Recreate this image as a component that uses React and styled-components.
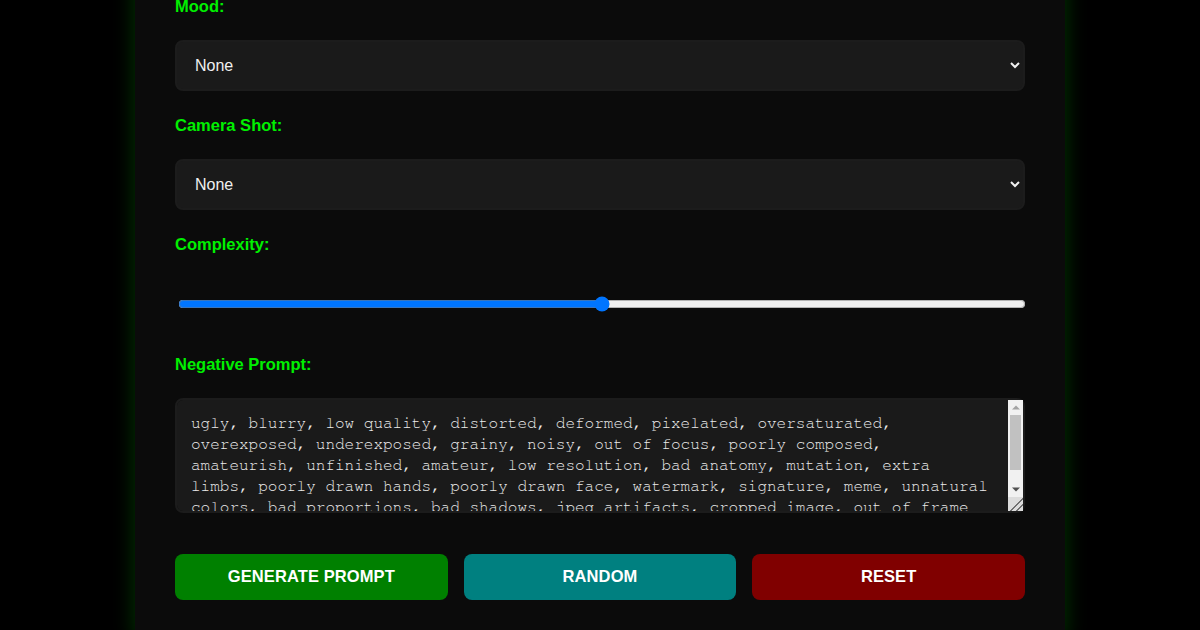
import React from "react";
import styled, { createGlobalStyle } from "styled-components";

const Global = createGlobalStyle`
  html, body {
    margin: 0;
    padding: 0;
    background: #000;
    font-family: "Liberation Sans", Arial, sans-serif;
    overflow: hidden;
  }
  * { box-sizing: border-box; }
`;

const Page = styled.div`
  display: flex;
  justify-content: center;
  min-height: 630px;
  background: #000;
`;

const Panel = styled.div`
  width: 930px;
  margin-top: -44px;
  padding: 40px 40px 40px;
  background: #0b0b0b;
  box-shadow: 0 0 20px rgba(0, 255, 0, 0.22);
  display: flex;
  flex-direction: column;
  gap: 24px;
`;

const Group = styled.div`
  display: flex;
  flex-direction: column;
  gap: 23px;
`;

const Label = styled.label`
  display: block;
  color: #00f000;
  font-weight: bold;
  font-size: 16.5px;
  line-height: 21px;
  height: 21px;
`;

const Select = styled.select`
  width: 100%;
  height: 51px;
  padding: 0 14px;
  background: #1a1a1a;
  color: #f0f0f0;
  border: 2px solid #1c1c1c;
  border-radius: 8px;
  font-family: "Liberation Sans", Arial, sans-serif;
  font-size: 16px;
  outline: none;
`;

const SliderWrap = styled.div`
  height: 52px;
  display: flex;
  align-items: center;
`;

const Range = styled.input`
  flex-shrink: 0;
  width: calc(100% - 2px);
  margin: 0 0 0 3px;
`;

const TextWrap = styled.div`
  position: relative;
  height: 115px;
`;

const TextArea = styled.textarea`
  display: block;
  width: 100%;
  height: 115px;
  padding: 13px 29px 15px 14px;
  background: #1a1a1a;
  color: #ececec;
  border: 2px solid #1c1c1c;
  border-radius: 8px;
  font-family: "Nimbus Mono PS", "Nimbus Mono L", FreeMono, Courier, "Liberation Mono", monospace;
  font-size: 16px;
  line-height: 21px;
  outline: none;

  &::-webkit-resizer {
    background-color: #dcdcdc;
    background-image: linear-gradient(
      135deg,
      transparent 0 55%,
      #707070 55% 61%,
      transparent 61% 76%,
      #707070 76% 82%,
      transparent 82%
    );
  }
`;

const ScrollBar = styled.div`
  position: absolute;
  top: 2px;
  right: 2px;
  width: 15px;
  height: 97px;
  background: #f1f1f1;
  display: flex;
  flex-direction: column;
  pointer-events: none;
`;

const ScrollButton = styled.div`
  height: 15px;
  display: flex;
  align-items: center;
  justify-content: center;
  flex-shrink: 0;
`;

const Track = styled.div`
  flex: 1;
  padding: 0 2px;
`;

const Thumb = styled.div`
  height: 55px;
  background: #c1c1c1;
`;

const Arrow = ({ up, color }) => (
  <svg width="8" height="5" viewBox="0 0 8 5">
    <polygon points={up ? "0,4.5 4,0.5 8,4.5" : "0,0.5 8,0.5 4,4.5"} fill={color} />
  </svg>
);

const Buttons = styled.div`
  display: grid;
  grid-template-columns: repeat(3, 1fr);
  gap: 16px;
  margin-top: 17px;
`;

const Button = styled.button`
  height: 46px;
  border: none;
  border-radius: 8px;
  background: ${(p) => p.$bg};
  color: #fff;
  font-family: "Liberation Sans", Arial, sans-serif;
  font-weight: bold;
  font-size: 16.5px;
  letter-spacing: 0.1px;
  line-height: 44px;
  padding: 0 0 2px;
  text-transform: uppercase;
  cursor: pointer;
`;

const negative =
  "ugly, blurry, low quality, distorted, deformed, pixelated, oversaturated, overexposed, underexposed, grainy, noisy, out of focus, poorly composed, amateurish, unfinished, amateur, low resolution, bad anatomy, mutation, extra limbs, poorly drawn hands, poorly drawn face, watermark, signature, meme, unnatural colors, bad proportions, bad shadows, jpeg artifacts, cropped image, out of frame";

export default function App() {
  return (
    <>
      <Global />
      <Page>
        <Panel>
          <Group>
            <Label>Mood:</Label>
            <Select defaultValue="None">
              <option>None</option>
              <option>Happy</option>
              <option>Dark</option>
            </Select>
          </Group>
          <Group>
            <Label>Camera Shot:</Label>
            <Select defaultValue="None">
              <option>None</option>
              <option>Close-up</option>
              <option>Wide shot</option>
            </Select>
          </Group>
          <Group>
            <Label>Complexity:</Label>
            <SliderWrap>
              <Range type="range" min="0" max="100" defaultValue="50" />
            </SliderWrap>
          </Group>
          <Group>
            <Label>Negative Prompt:</Label>
            <TextWrap>
              <TextArea defaultValue={negative} />
              <ScrollBar>
                <ScrollButton>
                  <Arrow up color="#a3a3a3" />
                </ScrollButton>
                <Track>
                  <Thumb />
                </Track>
                <ScrollButton>
                  <Arrow color="#505050" />
                </ScrollButton>
              </ScrollBar>
            </TextWrap>
          </Group>
          <Buttons>
            <Button $bg="#008000">Generate Prompt</Button>
            <Button $bg="#008080">Random</Button>
            <Button $bg="#800000">Reset</Button>
          </Buttons>
        </Panel>
      </Page>
    </>
  );
}
